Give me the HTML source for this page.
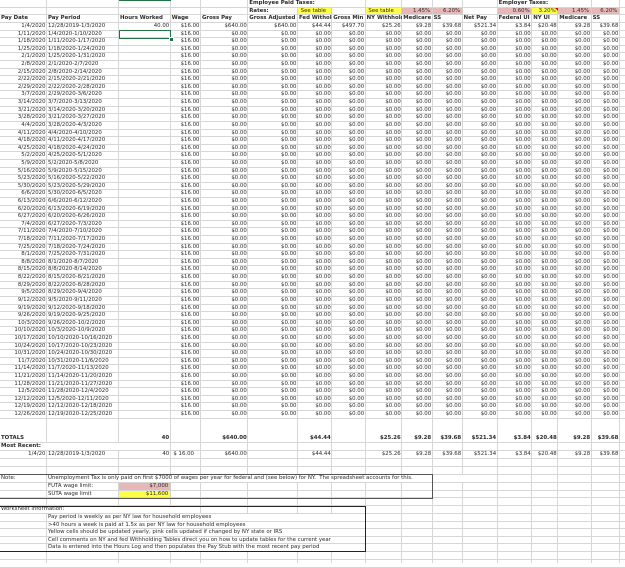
<!DOCTYPE html>
<html><head><meta charset="utf-8">
<style>
body{margin:0;width:625px;height:563px;overflow:hidden;background:#fff;font-family:"DejaVu Sans",Verdana,sans-serif;font-size:5.4px;color:#2a2a2a;position:relative}
.v{position:absolute;top:0;width:1px;height:563px;background:#d6d6d6}
.w{position:absolute;top:0;left:0;width:625px}
.r{position:relative;height:7.61px;display:grid;grid-template-columns:47px 72px 51.7px 30.3px 47.3px 49.7px 34.3px 33.4px 36.6px 30.4px 30px 35px 34.6px 26px 33.4px 28.3px 5px;border-bottom:1px solid #d6d6d6;box-sizing:border-box;line-height:6.8px;align-items:end}
.r>span{text-align:right;padding:0 1.5px 0 1px;overflow:hidden;white-space:nowrap;box-sizing:border-box;height:100%}
.r>span.l{text-align:left}
.b{font-weight:bold}
.r>span.o{overflow:visible;background:#fff;text-align:left}
.p{background:#e6b9b8;border-right:1px solid #cfcfcf}
.y{background:#ffff47;border-right:1px solid #cfcfcf}
.t{height:24.6px}
.t>span{display:flex;align-items:flex-end;justify-content:flex-end}
</style></head><body>
<div class="v" style="left:46px"></div><div class="v" style="left:118px"></div><div class="v" style="left:169.7px"></div><div class="v" style="left:200px"></div><div class="v" style="left:247.3px"></div><div class="v" style="left:297px"></div><div class="v" style="left:331.3px"></div><div class="v" style="left:364.7px"></div><div class="v" style="left:401.3px"></div><div class="v" style="left:431.7px"></div><div class="v" style="left:461.7px"></div><div class="v" style="left:496.7px"></div><div class="v" style="left:531.3px"></div><div class="v" style="left:557.3px"></div><div class="v" style="left:590.7px"></div><div class="v" style="left:619px"></div>
<div class="w">
<div class="r" style="height:7.7px"><span class="b o" style="grid-column:6/8">Employee Paid Taxes:</span><span class="b o" style="grid-column:13/15">Employer Taxes:</span></div>
<div class="r" style="height:7.6px"><span class="b l" style="grid-column:6">Rates:</span><span class="y l">&nbsp;See table</span><span></span><span class="y l">&nbsp;See table</span><span class="p">1.45%</span><span class="p">6.20%</span><span></span><span class="p">0.60%</span><span class="y">3.20%</span><span class="p">1.45%</span><span class="p">6.20%</span></div>
<div class="r b" style="height:7.7px"><span class="l">Pay Date</span><span class="l">Pay Period</span><span class="l">Hours Worked</span><span class="l">Wage</span><span class="l">Gross Pay</span><span class="l">Gross Adjusted</span><span class="l">Fed Withold</span><span class="l">Gross Min</span><span class="l">NY Withhold</span><span class="l">Medicare</span><span class="l">SS</span><span class="l">Net Pay</span><span class="l">Federal UI</span><span class="l">NY UI</span><span class="l">Medicare</span><span class="l">SS</span></div>
<div class="r"><span>1/4/2020</span><span class="l">12/28/2019-1/3/2020</span><span>40.00</span><span>$16.00</span><span>$640.00</span><span>$640.00</span><span>$44.44</span><span>$497.70</span><span>$25.26</span><span>$9.28</span><span>$39.68</span><span>$521.34</span><span>$3.84</span><span>$20.48</span><span>$9.28</span><span>$39.68</span></div>
<div class="r"><span>1/11/2020</span><span class="l">1/4/2020-1/10/2020</span><span></span><span>$16.00</span><span>$0.00</span><span>$0.00</span><span>$0.00</span><span>$0.00</span><span>$0.00</span><span>$0.00</span><span>$0.00</span><span>$0.00</span><span>$0.00</span><span>$0.00</span><span>$0.00</span><span>$0.00</span></div>
<div class="r"><span>1/18/2020</span><span class="l">1/11/2020-1/17/2020</span><span></span><span>$16.00</span><span>$0.00</span><span>$0.00</span><span>$0.00</span><span>$0.00</span><span>$0.00</span><span>$0.00</span><span>$0.00</span><span>$0.00</span><span>$0.00</span><span>$0.00</span><span>$0.00</span><span>$0.00</span></div>
<div class="r"><span>1/25/2020</span><span class="l">1/18/2020-1/24/2020</span><span></span><span>$16.00</span><span>$0.00</span><span>$0.00</span><span>$0.00</span><span>$0.00</span><span>$0.00</span><span>$0.00</span><span>$0.00</span><span>$0.00</span><span>$0.00</span><span>$0.00</span><span>$0.00</span><span>$0.00</span></div>
<div class="r"><span>2/1/2020</span><span class="l">1/25/2020-1/31/2020</span><span></span><span>$16.00</span><span>$0.00</span><span>$0.00</span><span>$0.00</span><span>$0.00</span><span>$0.00</span><span>$0.00</span><span>$0.00</span><span>$0.00</span><span>$0.00</span><span>$0.00</span><span>$0.00</span><span>$0.00</span></div>
<div class="r"><span>2/8/2020</span><span class="l">2/1/2020-2/7/2020</span><span></span><span>$16.00</span><span>$0.00</span><span>$0.00</span><span>$0.00</span><span>$0.00</span><span>$0.00</span><span>$0.00</span><span>$0.00</span><span>$0.00</span><span>$0.00</span><span>$0.00</span><span>$0.00</span><span>$0.00</span></div>
<div class="r"><span>2/15/2020</span><span class="l">2/8/2020-2/14/2020</span><span></span><span>$16.00</span><span>$0.00</span><span>$0.00</span><span>$0.00</span><span>$0.00</span><span>$0.00</span><span>$0.00</span><span>$0.00</span><span>$0.00</span><span>$0.00</span><span>$0.00</span><span>$0.00</span><span>$0.00</span></div>
<div class="r"><span>2/22/2020</span><span class="l">2/15/2020-2/21/2020</span><span></span><span>$16.00</span><span>$0.00</span><span>$0.00</span><span>$0.00</span><span>$0.00</span><span>$0.00</span><span>$0.00</span><span>$0.00</span><span>$0.00</span><span>$0.00</span><span>$0.00</span><span>$0.00</span><span>$0.00</span></div>
<div class="r"><span>2/29/2020</span><span class="l">2/22/2020-2/28/2020</span><span></span><span>$16.00</span><span>$0.00</span><span>$0.00</span><span>$0.00</span><span>$0.00</span><span>$0.00</span><span>$0.00</span><span>$0.00</span><span>$0.00</span><span>$0.00</span><span>$0.00</span><span>$0.00</span><span>$0.00</span></div>
<div class="r"><span>3/7/2020</span><span class="l">2/29/2020-3/6/2020</span><span></span><span>$16.00</span><span>$0.00</span><span>$0.00</span><span>$0.00</span><span>$0.00</span><span>$0.00</span><span>$0.00</span><span>$0.00</span><span>$0.00</span><span>$0.00</span><span>$0.00</span><span>$0.00</span><span>$0.00</span></div>
<div class="r"><span>3/14/2020</span><span class="l">3/7/2020-3/13/2020</span><span></span><span>$16.00</span><span>$0.00</span><span>$0.00</span><span>$0.00</span><span>$0.00</span><span>$0.00</span><span>$0.00</span><span>$0.00</span><span>$0.00</span><span>$0.00</span><span>$0.00</span><span>$0.00</span><span>$0.00</span></div>
<div class="r"><span>3/21/2020</span><span class="l">3/14/2020-3/20/2020</span><span></span><span>$16.00</span><span>$0.00</span><span>$0.00</span><span>$0.00</span><span>$0.00</span><span>$0.00</span><span>$0.00</span><span>$0.00</span><span>$0.00</span><span>$0.00</span><span>$0.00</span><span>$0.00</span><span>$0.00</span></div>
<div class="r"><span>3/28/2020</span><span class="l">3/21/2020-3/27/2020</span><span></span><span>$16.00</span><span>$0.00</span><span>$0.00</span><span>$0.00</span><span>$0.00</span><span>$0.00</span><span>$0.00</span><span>$0.00</span><span>$0.00</span><span>$0.00</span><span>$0.00</span><span>$0.00</span><span>$0.00</span></div>
<div class="r"><span>4/4/2020</span><span class="l">3/28/2020-4/3/2020</span><span></span><span>$16.00</span><span>$0.00</span><span>$0.00</span><span>$0.00</span><span>$0.00</span><span>$0.00</span><span>$0.00</span><span>$0.00</span><span>$0.00</span><span>$0.00</span><span>$0.00</span><span>$0.00</span><span>$0.00</span></div>
<div class="r"><span>4/11/2020</span><span class="l">4/4/2020-4/10/2020</span><span></span><span>$16.00</span><span>$0.00</span><span>$0.00</span><span>$0.00</span><span>$0.00</span><span>$0.00</span><span>$0.00</span><span>$0.00</span><span>$0.00</span><span>$0.00</span><span>$0.00</span><span>$0.00</span><span>$0.00</span></div>
<div class="r"><span>4/18/2020</span><span class="l">4/11/2020-4/17/2020</span><span></span><span>$16.00</span><span>$0.00</span><span>$0.00</span><span>$0.00</span><span>$0.00</span><span>$0.00</span><span>$0.00</span><span>$0.00</span><span>$0.00</span><span>$0.00</span><span>$0.00</span><span>$0.00</span><span>$0.00</span></div>
<div class="r"><span>4/25/2020</span><span class="l">4/18/2020-4/24/2020</span><span></span><span>$16.00</span><span>$0.00</span><span>$0.00</span><span>$0.00</span><span>$0.00</span><span>$0.00</span><span>$0.00</span><span>$0.00</span><span>$0.00</span><span>$0.00</span><span>$0.00</span><span>$0.00</span><span>$0.00</span></div>
<div class="r"><span>5/2/2020</span><span class="l">4/25/2020-5/1/2020</span><span></span><span>$16.00</span><span>$0.00</span><span>$0.00</span><span>$0.00</span><span>$0.00</span><span>$0.00</span><span>$0.00</span><span>$0.00</span><span>$0.00</span><span>$0.00</span><span>$0.00</span><span>$0.00</span><span>$0.00</span></div>
<div class="r"><span>5/9/2020</span><span class="l">5/2/2020-5/8/2020</span><span></span><span>$16.00</span><span>$0.00</span><span>$0.00</span><span>$0.00</span><span>$0.00</span><span>$0.00</span><span>$0.00</span><span>$0.00</span><span>$0.00</span><span>$0.00</span><span>$0.00</span><span>$0.00</span><span>$0.00</span></div>
<div class="r"><span>5/16/2020</span><span class="l">5/9/2020-5/15/2020</span><span></span><span>$16.00</span><span>$0.00</span><span>$0.00</span><span>$0.00</span><span>$0.00</span><span>$0.00</span><span>$0.00</span><span>$0.00</span><span>$0.00</span><span>$0.00</span><span>$0.00</span><span>$0.00</span><span>$0.00</span></div>
<div class="r"><span>5/23/2020</span><span class="l">5/16/2020-5/22/2020</span><span></span><span>$16.00</span><span>$0.00</span><span>$0.00</span><span>$0.00</span><span>$0.00</span><span>$0.00</span><span>$0.00</span><span>$0.00</span><span>$0.00</span><span>$0.00</span><span>$0.00</span><span>$0.00</span><span>$0.00</span></div>
<div class="r"><span>5/30/2020</span><span class="l">5/23/2020-5/29/2020</span><span></span><span>$16.00</span><span>$0.00</span><span>$0.00</span><span>$0.00</span><span>$0.00</span><span>$0.00</span><span>$0.00</span><span>$0.00</span><span>$0.00</span><span>$0.00</span><span>$0.00</span><span>$0.00</span><span>$0.00</span></div>
<div class="r"><span>6/6/2020</span><span class="l">5/30/2020-6/5/2020</span><span></span><span>$16.00</span><span>$0.00</span><span>$0.00</span><span>$0.00</span><span>$0.00</span><span>$0.00</span><span>$0.00</span><span>$0.00</span><span>$0.00</span><span>$0.00</span><span>$0.00</span><span>$0.00</span><span>$0.00</span></div>
<div class="r"><span>6/13/2020</span><span class="l">6/6/2020-6/12/2020</span><span></span><span>$16.00</span><span>$0.00</span><span>$0.00</span><span>$0.00</span><span>$0.00</span><span>$0.00</span><span>$0.00</span><span>$0.00</span><span>$0.00</span><span>$0.00</span><span>$0.00</span><span>$0.00</span><span>$0.00</span></div>
<div class="r"><span>6/20/2020</span><span class="l">6/13/2020-6/19/2020</span><span></span><span>$16.00</span><span>$0.00</span><span>$0.00</span><span>$0.00</span><span>$0.00</span><span>$0.00</span><span>$0.00</span><span>$0.00</span><span>$0.00</span><span>$0.00</span><span>$0.00</span><span>$0.00</span><span>$0.00</span></div>
<div class="r"><span>6/27/2020</span><span class="l">6/20/2020-6/26/2020</span><span></span><span>$16.00</span><span>$0.00</span><span>$0.00</span><span>$0.00</span><span>$0.00</span><span>$0.00</span><span>$0.00</span><span>$0.00</span><span>$0.00</span><span>$0.00</span><span>$0.00</span><span>$0.00</span><span>$0.00</span></div>
<div class="r"><span>7/4/2020</span><span class="l">6/27/2020-7/3/2020</span><span></span><span>$16.00</span><span>$0.00</span><span>$0.00</span><span>$0.00</span><span>$0.00</span><span>$0.00</span><span>$0.00</span><span>$0.00</span><span>$0.00</span><span>$0.00</span><span>$0.00</span><span>$0.00</span><span>$0.00</span></div>
<div class="r"><span>7/11/2020</span><span class="l">7/4/2020-7/10/2020</span><span></span><span>$16.00</span><span>$0.00</span><span>$0.00</span><span>$0.00</span><span>$0.00</span><span>$0.00</span><span>$0.00</span><span>$0.00</span><span>$0.00</span><span>$0.00</span><span>$0.00</span><span>$0.00</span><span>$0.00</span></div>
<div class="r"><span>7/18/2020</span><span class="l">7/11/2020-7/17/2020</span><span></span><span>$16.00</span><span>$0.00</span><span>$0.00</span><span>$0.00</span><span>$0.00</span><span>$0.00</span><span>$0.00</span><span>$0.00</span><span>$0.00</span><span>$0.00</span><span>$0.00</span><span>$0.00</span><span>$0.00</span></div>
<div class="r"><span>7/25/2020</span><span class="l">7/18/2020-7/24/2020</span><span></span><span>$16.00</span><span>$0.00</span><span>$0.00</span><span>$0.00</span><span>$0.00</span><span>$0.00</span><span>$0.00</span><span>$0.00</span><span>$0.00</span><span>$0.00</span><span>$0.00</span><span>$0.00</span><span>$0.00</span></div>
<div class="r"><span>8/1/2020</span><span class="l">7/25/2020-7/31/2020</span><span></span><span>$16.00</span><span>$0.00</span><span>$0.00</span><span>$0.00</span><span>$0.00</span><span>$0.00</span><span>$0.00</span><span>$0.00</span><span>$0.00</span><span>$0.00</span><span>$0.00</span><span>$0.00</span><span>$0.00</span></div>
<div class="r"><span>8/8/2020</span><span class="l">8/1/2020-8/7/2020</span><span></span><span>$16.00</span><span>$0.00</span><span>$0.00</span><span>$0.00</span><span>$0.00</span><span>$0.00</span><span>$0.00</span><span>$0.00</span><span>$0.00</span><span>$0.00</span><span>$0.00</span><span>$0.00</span><span>$0.00</span></div>
<div class="r"><span>8/15/2020</span><span class="l">8/8/2020-8/14/2020</span><span></span><span>$16.00</span><span>$0.00</span><span>$0.00</span><span>$0.00</span><span>$0.00</span><span>$0.00</span><span>$0.00</span><span>$0.00</span><span>$0.00</span><span>$0.00</span><span>$0.00</span><span>$0.00</span><span>$0.00</span></div>
<div class="r"><span>8/22/2020</span><span class="l">8/15/2020-8/21/2020</span><span></span><span>$16.00</span><span>$0.00</span><span>$0.00</span><span>$0.00</span><span>$0.00</span><span>$0.00</span><span>$0.00</span><span>$0.00</span><span>$0.00</span><span>$0.00</span><span>$0.00</span><span>$0.00</span><span>$0.00</span></div>
<div class="r"><span>8/29/2020</span><span class="l">8/22/2020-8/28/2020</span><span></span><span>$16.00</span><span>$0.00</span><span>$0.00</span><span>$0.00</span><span>$0.00</span><span>$0.00</span><span>$0.00</span><span>$0.00</span><span>$0.00</span><span>$0.00</span><span>$0.00</span><span>$0.00</span><span>$0.00</span></div>
<div class="r"><span>9/5/2020</span><span class="l">8/29/2020-9/4/2020</span><span></span><span>$16.00</span><span>$0.00</span><span>$0.00</span><span>$0.00</span><span>$0.00</span><span>$0.00</span><span>$0.00</span><span>$0.00</span><span>$0.00</span><span>$0.00</span><span>$0.00</span><span>$0.00</span><span>$0.00</span></div>
<div class="r"><span>9/12/2020</span><span class="l">9/5/2020-9/11/2020</span><span></span><span>$16.00</span><span>$0.00</span><span>$0.00</span><span>$0.00</span><span>$0.00</span><span>$0.00</span><span>$0.00</span><span>$0.00</span><span>$0.00</span><span>$0.00</span><span>$0.00</span><span>$0.00</span><span>$0.00</span></div>
<div class="r"><span>9/19/2020</span><span class="l">9/12/2020-9/18/2020</span><span></span><span>$16.00</span><span>$0.00</span><span>$0.00</span><span>$0.00</span><span>$0.00</span><span>$0.00</span><span>$0.00</span><span>$0.00</span><span>$0.00</span><span>$0.00</span><span>$0.00</span><span>$0.00</span><span>$0.00</span></div>
<div class="r"><span>9/26/2020</span><span class="l">9/19/2020-9/25/2020</span><span></span><span>$16.00</span><span>$0.00</span><span>$0.00</span><span>$0.00</span><span>$0.00</span><span>$0.00</span><span>$0.00</span><span>$0.00</span><span>$0.00</span><span>$0.00</span><span>$0.00</span><span>$0.00</span><span>$0.00</span></div>
<div class="r"><span>10/3/2020</span><span class="l">9/26/2020-10/2/2020</span><span></span><span>$16.00</span><span>$0.00</span><span>$0.00</span><span>$0.00</span><span>$0.00</span><span>$0.00</span><span>$0.00</span><span>$0.00</span><span>$0.00</span><span>$0.00</span><span>$0.00</span><span>$0.00</span><span>$0.00</span></div>
<div class="r"><span>10/10/2020</span><span class="l">10/3/2020-10/9/2020</span><span></span><span>$16.00</span><span>$0.00</span><span>$0.00</span><span>$0.00</span><span>$0.00</span><span>$0.00</span><span>$0.00</span><span>$0.00</span><span>$0.00</span><span>$0.00</span><span>$0.00</span><span>$0.00</span><span>$0.00</span></div>
<div class="r"><span>10/17/2020</span><span class="l">10/10/2020-10/16/2020</span><span></span><span>$16.00</span><span>$0.00</span><span>$0.00</span><span>$0.00</span><span>$0.00</span><span>$0.00</span><span>$0.00</span><span>$0.00</span><span>$0.00</span><span>$0.00</span><span>$0.00</span><span>$0.00</span><span>$0.00</span></div>
<div class="r"><span>10/24/2020</span><span class="l">10/17/2020-10/23/2020</span><span></span><span>$16.00</span><span>$0.00</span><span>$0.00</span><span>$0.00</span><span>$0.00</span><span>$0.00</span><span>$0.00</span><span>$0.00</span><span>$0.00</span><span>$0.00</span><span>$0.00</span><span>$0.00</span><span>$0.00</span></div>
<div class="r"><span>10/31/2020</span><span class="l">10/24/2020-10/30/2020</span><span></span><span>$16.00</span><span>$0.00</span><span>$0.00</span><span>$0.00</span><span>$0.00</span><span>$0.00</span><span>$0.00</span><span>$0.00</span><span>$0.00</span><span>$0.00</span><span>$0.00</span><span>$0.00</span><span>$0.00</span></div>
<div class="r"><span>11/7/2020</span><span class="l">10/31/2020-11/6/2020</span><span></span><span>$16.00</span><span>$0.00</span><span>$0.00</span><span>$0.00</span><span>$0.00</span><span>$0.00</span><span>$0.00</span><span>$0.00</span><span>$0.00</span><span>$0.00</span><span>$0.00</span><span>$0.00</span><span>$0.00</span></div>
<div class="r"><span>11/14/2020</span><span class="l">11/7/2020-11/13/2020</span><span></span><span>$16.00</span><span>$0.00</span><span>$0.00</span><span>$0.00</span><span>$0.00</span><span>$0.00</span><span>$0.00</span><span>$0.00</span><span>$0.00</span><span>$0.00</span><span>$0.00</span><span>$0.00</span><span>$0.00</span></div>
<div class="r"><span>11/21/2020</span><span class="l">11/14/2020-11/20/2020</span><span></span><span>$16.00</span><span>$0.00</span><span>$0.00</span><span>$0.00</span><span>$0.00</span><span>$0.00</span><span>$0.00</span><span>$0.00</span><span>$0.00</span><span>$0.00</span><span>$0.00</span><span>$0.00</span><span>$0.00</span></div>
<div class="r"><span>11/28/2020</span><span class="l">11/21/2020-11/27/2020</span><span></span><span>$16.00</span><span>$0.00</span><span>$0.00</span><span>$0.00</span><span>$0.00</span><span>$0.00</span><span>$0.00</span><span>$0.00</span><span>$0.00</span><span>$0.00</span><span>$0.00</span><span>$0.00</span><span>$0.00</span></div>
<div class="r"><span>12/5/2020</span><span class="l">11/28/2020-12/4/2020</span><span></span><span>$16.00</span><span>$0.00</span><span>$0.00</span><span>$0.00</span><span>$0.00</span><span>$0.00</span><span>$0.00</span><span>$0.00</span><span>$0.00</span><span>$0.00</span><span>$0.00</span><span>$0.00</span><span>$0.00</span></div>
<div class="r"><span>12/12/2020</span><span class="l">12/5/2020-12/11/2020</span><span></span><span>$16.00</span><span>$0.00</span><span>$0.00</span><span>$0.00</span><span>$0.00</span><span>$0.00</span><span>$0.00</span><span>$0.00</span><span>$0.00</span><span>$0.00</span><span>$0.00</span><span>$0.00</span><span>$0.00</span></div>
<div class="r"><span>12/19/2020</span><span class="l">12/12/2020-12/18/2020</span><span></span><span>$16.00</span><span>$0.00</span><span>$0.00</span><span>$0.00</span><span>$0.00</span><span>$0.00</span><span>$0.00</span><span>$0.00</span><span>$0.00</span><span>$0.00</span><span>$0.00</span><span>$0.00</span><span>$0.00</span></div>
<div class="r"><span>12/26/2020</span><span class="l">12/19/2020-12/25/2020</span><span></span><span>$16.00</span><span>$0.00</span><span>$0.00</span><span>$0.00</span><span>$0.00</span><span>$0.00</span><span>$0.00</span><span>$0.00</span><span>$0.00</span><span>$0.00</span><span>$0.00</span><span>$0.00</span><span>$0.00</span></div>
<div class="r t b"><span style="justify-content:flex-start">TOTALS</span><span></span><span>40</span><span></span><span>$640.00</span><span></span><span>$44.44</span><span></span><span>$25.26</span><span>$9.28</span><span>$39.68</span><span>$521.34</span><span>$3.84</span><span>$20.48</span><span>$9.28</span><span>$39.68</span></div>
<div class="r b" style="height:7.7px"><span class="o" style="grid-column:1/3">Most Recent:</span></div>
<div class="r" style="height:8.3px"><span>1/4/20</span><span class="l">12/28/2019-1/3/2020</span><span>40</span><span class="l">&nbsp;$ 16.00</span><span>$640.00</span><span></span><span>$44.44</span><span></span><span>$25.26</span><span>$9.28</span><span>$39.68</span><span>$521.34</span><span>$3.84</span><span>$20.48</span><span>$9.28</span><span>$39.68</span></div>
<div class="r" style="height:8px"></div>
<div class="r" style="height:7.4px"></div>
<div class="r" style="height:8px"><span class="l">Note:</span><span class="o" style="grid-column:2/12">Unemployment Tax is only paid on first $7000 of wages per year for federal and (see below) for NY.&nbsp; The spreadsheet accounts for this.</span></div>
<div class="r" style="height:8px"><span class="l" style="grid-column:2">FUTA wage limit:</span><span class="p">$7,000</span></div>
<div class="r" style="height:7.6px"><span class="l" style="grid-column:2">SUTA wage limit</span><span class="y">$11,600</span></div>
<div class="r" style="height:7.7px"></div>
<div class="r" style="height:8px"><span class="o" style="grid-column:1/4">Worksheet information:</span></div>
<div class="r" style="height:7.7px"><span class="o" style="grid-column:2/8">Pay period is weekly as per NY law for household employees</span></div>
<div class="r" style="height:7.3px"><span class="o" style="grid-column:2/8">&gt;40 hours a week is paid at 1.5x as per NY law for household employees</span></div>
<div class="r" style="height:7.7px"><span class="o" style="grid-column:2/8">Yellow cells should be updated yearly, pink cells updated if changed by NY state or IRS</span></div>
<div class="r" style="height:7.6px"><span class="o" style="grid-column:2/8">Cell comments on NY and fed Withholding Tables direct you on how to update tables for the current year</span></div>
<div class="r" style="height:7.7px"><span class="o" style="grid-column:2/8">Data is entered into the Hours Log and then populates the Pay Stub with the most recent pay period</span></div>
<div class="r" style="height:7.7px"></div>
<div class="r" style="height:8px"></div>
</div>
<div style="position:absolute;left:119px;top:0;width:52px;height:1px;background:#217346"></div>
<div style="position:absolute;left:118.5px;top:30.3px;width:52px;height:8.8px;border:1.5px solid #217346;box-sizing:border-box"></div>
<div style="position:absolute;left:168.5px;top:36.8px;width:3.5px;height:3.5px;background:#217346;border:0.5px solid #fff"></div>
<div style="position:absolute;left:554.5px;top:7.7px;width:0;height:0;border-top:3px solid #e00;border-left:3px solid transparent"></div>
<div style="position:absolute;left:0;top:474.2px;width:433px;height:24.4px;border:1px solid #555;border-left:none;box-sizing:border-box"></div>
<div style="position:absolute;left:0;top:505.5px;width:366px;height:46.8px;border:1.3px solid #222;border-left:none;box-sizing:border-box"></div>
</body></html>
